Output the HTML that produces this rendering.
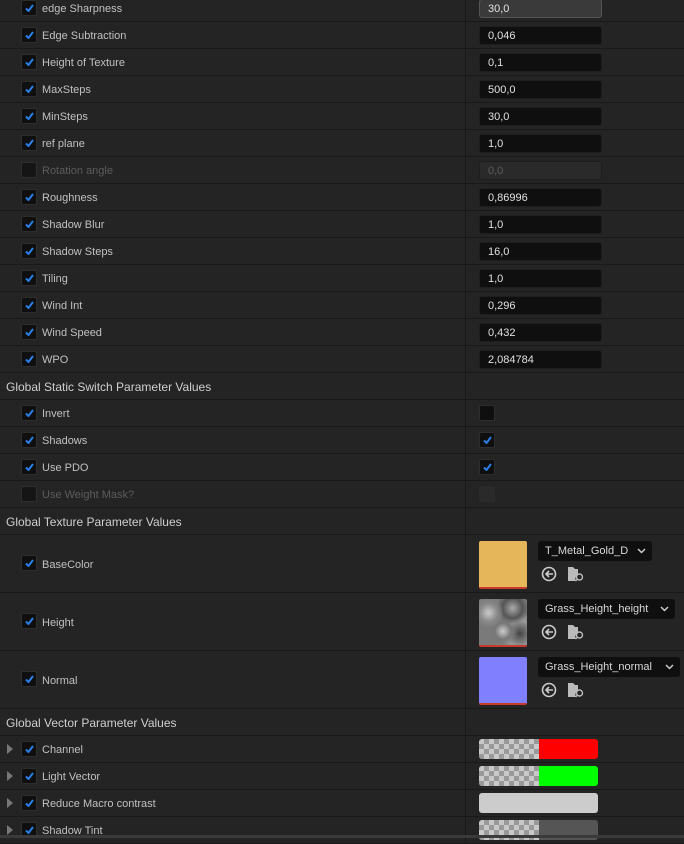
<!DOCTYPE html>
<html><head><meta charset="utf-8"><style>
*{margin:0;padding:0;box-sizing:border-box}
body{width:684px;height:838px;background:#242424;overflow:hidden;position:relative;font-family:"Liberation Sans",sans-serif;font-size:11px;color:#c0c0c0}
.r{position:absolute;left:0;width:684px;height:27px;background:#242424;border-bottom:1px solid #191919}
.r:after{content:"";position:absolute;left:465px;top:0;bottom:0;width:1px;background:#191919}
.cb{position:absolute;left:21px;width:16px;height:16px;background:#0f0f0f;border:1px solid #2e2e2e;border-radius:2px}
.cb svg{position:absolute;left:3px;top:3px}
.lb{position:absolute;left:42px;line-height:14px}
.v{position:absolute;left:479px;top:4px;width:123px;height:19px;background:#0f0f0f;border:1px solid #1e1e1e;border-radius:3px;padding-left:8px;line-height:18px;color:#e0e0e0}
.h{font-size:12px;color:#cfcfcf}
.h span{position:absolute;left:6px;top:7px}
.dis{color:#5c5c5c}
.tri{position:absolute;left:7px;width:0;height:0;border-left:6px solid #777;border-top:5px solid transparent;border-bottom:5px solid transparent}
.cbar{position:absolute;left:479px;top:3px;width:119px;height:20px;border-radius:3px;overflow:hidden;background:#ccc}
.chk{position:absolute;left:0;top:0;width:60px;height:20px;background-color:#c8c8c8;background-image:linear-gradient(45deg,#999 25%,transparent 25%,transparent 75%,#999 75%),linear-gradient(45deg,#999 25%,transparent 25%,transparent 75%,#999 75%);background-size:10px 10px;background-position:0 0,5px 5px}
.tex{position:absolute;left:479px;top:6px;width:48px;height:48px;border-radius:2px;border-bottom:2px solid #c83a2e}
.dd{position:absolute;left:538px;top:6px;height:20px;background:#0f0f0f;border-radius:3px;padding-left:7px;line-height:21px;color:#d8d8d8;font-size:11px}
.dd svg{position:absolute;right:6px;top:7px}
.ic{position:absolute;top:31px}
</style></head><body>

<div class="r" style="top:-5px"><div class="cb" style="top:5px"><svg width="9" height="8"><path d="M1 4.5L3.5 7L8 1" stroke="#2a7fe6" stroke-width="2" fill="none"/></svg></div><div class="lb" style="top:7px">edge Sharpness</div><div class="v" style="background:#3a3a3a;border-color:#555">30,0</div></div>
<div class="r" style="top:22px"><div class="cb" style="top:5px"><svg width="9" height="8"><path d="M1 4.5L3.5 7L8 1" stroke="#2a7fe6" stroke-width="2" fill="none"/></svg></div><div class="lb" style="top:7px">Edge Subtraction</div><div class="v">0,046</div></div>
<div class="r" style="top:49px"><div class="cb" style="top:5px"><svg width="9" height="8"><path d="M1 4.5L3.5 7L8 1" stroke="#2a7fe6" stroke-width="2" fill="none"/></svg></div><div class="lb" style="top:7px">Height of Texture</div><div class="v">0,1</div></div>
<div class="r" style="top:76px"><div class="cb" style="top:5px"><svg width="9" height="8"><path d="M1 4.5L3.5 7L8 1" stroke="#2a7fe6" stroke-width="2" fill="none"/></svg></div><div class="lb" style="top:7px">MaxSteps</div><div class="v">500,0</div></div>
<div class="r" style="top:103px"><div class="cb" style="top:5px"><svg width="9" height="8"><path d="M1 4.5L3.5 7L8 1" stroke="#2a7fe6" stroke-width="2" fill="none"/></svg></div><div class="lb" style="top:7px">MinSteps</div><div class="v">30,0</div></div>
<div class="r" style="top:130px"><div class="cb" style="top:5px"><svg width="9" height="8"><path d="M1 4.5L3.5 7L8 1" stroke="#2a7fe6" stroke-width="2" fill="none"/></svg></div><div class="lb" style="top:7px">ref plane</div><div class="v">1,0</div></div>
<div class="r" style="top:157px"><div class="cb" style="top:5px;background:#151515"></div><div class="lb dis" style="top:7px">Rotation angle</div><div class="v" style="background:#2a2a2a;color:#5c5c5c">0,0</div></div>
<div class="r" style="top:184px"><div class="cb" style="top:5px"><svg width="9" height="8"><path d="M1 4.5L3.5 7L8 1" stroke="#2a7fe6" stroke-width="2" fill="none"/></svg></div><div class="lb" style="top:7px">Roughness</div><div class="v">0,86996</div></div>
<div class="r" style="top:211px"><div class="cb" style="top:5px"><svg width="9" height="8"><path d="M1 4.5L3.5 7L8 1" stroke="#2a7fe6" stroke-width="2" fill="none"/></svg></div><div class="lb" style="top:7px">Shadow Blur</div><div class="v">1,0</div></div>
<div class="r" style="top:238px"><div class="cb" style="top:5px"><svg width="9" height="8"><path d="M1 4.5L3.5 7L8 1" stroke="#2a7fe6" stroke-width="2" fill="none"/></svg></div><div class="lb" style="top:7px">Shadow Steps</div><div class="v">16,0</div></div>
<div class="r" style="top:265px"><div class="cb" style="top:5px"><svg width="9" height="8"><path d="M1 4.5L3.5 7L8 1" stroke="#2a7fe6" stroke-width="2" fill="none"/></svg></div><div class="lb" style="top:7px">Tiling</div><div class="v">1,0</div></div>
<div class="r" style="top:292px"><div class="cb" style="top:5px"><svg width="9" height="8"><path d="M1 4.5L3.5 7L8 1" stroke="#2a7fe6" stroke-width="2" fill="none"/></svg></div><div class="lb" style="top:7px">Wind Int</div><div class="v">0,296</div></div>
<div class="r" style="top:319px"><div class="cb" style="top:5px"><svg width="9" height="8"><path d="M1 4.5L3.5 7L8 1" stroke="#2a7fe6" stroke-width="2" fill="none"/></svg></div><div class="lb" style="top:7px">Wind Speed</div><div class="v">0,432</div></div>
<div class="r" style="top:346px"><div class="cb" style="top:5px"><svg width="9" height="8"><path d="M1 4.5L3.5 7L8 1" stroke="#2a7fe6" stroke-width="2" fill="none"/></svg></div><div class="lb" style="top:7px">WPO</div><div class="v">2,084784</div></div>

<div class="r h" style="top:373px"><span>Global Static Switch Parameter Values</span></div>
<div class="r" style="top:400px"><div class="cb" style="top:5px"><svg width="9" height="8"><path d="M1 4.5L3.5 7L8 1" stroke="#2a7fe6" stroke-width="2" fill="none"/></svg></div><div class="lb" style="top:7px">Invert</div><div class="cb" style="top:5px;left:479px"></div></div>
<div class="r" style="top:427px"><div class="cb" style="top:5px"><svg width="9" height="8"><path d="M1 4.5L3.5 7L8 1" stroke="#2a7fe6" stroke-width="2" fill="none"/></svg></div><div class="lb" style="top:7px">Shadows</div><div class="cb" style="top:5px;left:479px"><svg width="9" height="8"><path d="M1 4.5L3.5 7L8 1" stroke="#2a7fe6" stroke-width="2" fill="none"/></svg></div></div>
<div class="r" style="top:454px"><div class="cb" style="top:5px"><svg width="9" height="8"><path d="M1 4.5L3.5 7L8 1" stroke="#2a7fe6" stroke-width="2" fill="none"/></svg></div><div class="lb" style="top:7px">Use PDO</div><div class="cb" style="top:5px;left:479px"><svg width="9" height="8"><path d="M1 4.5L3.5 7L8 1" stroke="#2a7fe6" stroke-width="2" fill="none"/></svg></div></div>
<div class="r" style="top:481px"><div class="cb" style="top:5px;background:#151515"></div><div class="lb dis" style="top:7px">Use Weight Mask?</div><div class="cb" style="top:5px;left:479px;background:#2a2a2a;border-color:#2a2a2a"></div></div>

<div class="r h" style="top:508px"><span>Global Texture Parameter Values</span></div>
<div class="r" style="top:535px;height:58px"><div class="cb" style="top:20px"><svg width="9" height="8"><path d="M1 4.5L3.5 7L8 1" stroke="#2a7fe6" stroke-width="2" fill="none"/></svg></div><div class="lb" style="top:23px">BaseColor</div>
<div class="tex" style="background:#e6b65a"></div>
<div class="dd" style="width:114px">T_Metal_Gold_D<svg width="9" height="6"><path d="M1 1L4.5 4.5L8 1" stroke="#ccc" stroke-width="1.5" fill="none"/></svg></div>
<svg class="ic" style="left:541px" width="16" height="16"><circle cx="8" cy="8" r="6.5" stroke="#ccc" stroke-width="1.6" fill="none"/><path d="M12 8H5M8 5L5 8L8 11" stroke="#ccc" stroke-width="1.6" fill="none"/></svg>
<svg class="ic" style="left:567px" width="18" height="16"><path d="M1 1H6L8 3H11V9A4 4 0 0 0 9 15H1Z" fill="#bbb"/><circle cx="12.5" cy="11" r="3" stroke="#bbb" stroke-width="1.4" fill="none"/><path d="M10.5 13L8.5 15" stroke="#bbb" stroke-width="1.4"/></svg></div>
<div class="r" style="top:593px;height:58px"><div class="cb" style="top:20px"><svg width="9" height="8"><path d="M1 4.5L3.5 7L8 1" stroke="#2a7fe6" stroke-width="2" fill="none"/></svg></div><div class="lb" style="top:23px">Height</div>
<div class="tex" style="background:radial-gradient(circle at 20% 30%,#ccc 0,#888 18%,transparent 30%),radial-gradient(circle at 70% 20%,#aaa 0,#555 20%,transparent 32%),radial-gradient(circle at 50% 70%,#ccc 0,#777 20%,transparent 35%),radial-gradient(circle at 85% 75%,#444 0,#999 25%,transparent 40%),#7a7a7a"></div>
<div class="dd" style="width:137px">Grass_Height_height<svg width="9" height="6"><path d="M1 1L4.5 4.5L8 1" stroke="#ccc" stroke-width="1.5" fill="none"/></svg></div>
<svg class="ic" style="left:541px" width="16" height="16"><circle cx="8" cy="8" r="6.5" stroke="#ccc" stroke-width="1.6" fill="none"/><path d="M12 8H5M8 5L5 8L8 11" stroke="#ccc" stroke-width="1.6" fill="none"/></svg>
<svg class="ic" style="left:567px" width="18" height="16"><path d="M1 1H6L8 3H11V9A4 4 0 0 0 9 15H1Z" fill="#bbb"/><circle cx="12.5" cy="11" r="3" stroke="#bbb" stroke-width="1.4" fill="none"/><path d="M10.5 13L8.5 15" stroke="#bbb" stroke-width="1.4"/></svg></div>
<div class="r" style="top:651px;height:58px"><div class="cb" style="top:20px"><svg width="9" height="8"><path d="M1 4.5L3.5 7L8 1" stroke="#2a7fe6" stroke-width="2" fill="none"/></svg></div><div class="lb" style="top:23px">Normal</div>
<div class="tex" style="background:#8080ff"></div>
<div class="dd" style="width:142px">Grass_Height_normal<svg width="9" height="6"><path d="M1 1L4.5 4.5L8 1" stroke="#ccc" stroke-width="1.5" fill="none"/></svg></div>
<svg class="ic" style="left:541px" width="16" height="16"><circle cx="8" cy="8" r="6.5" stroke="#ccc" stroke-width="1.6" fill="none"/><path d="M12 8H5M8 5L5 8L8 11" stroke="#ccc" stroke-width="1.6" fill="none"/></svg>
<svg class="ic" style="left:567px" width="18" height="16"><path d="M1 1H6L8 3H11V9A4 4 0 0 0 9 15H1Z" fill="#bbb"/><circle cx="12.5" cy="11" r="3" stroke="#bbb" stroke-width="1.4" fill="none"/><path d="M10.5 13L8.5 15" stroke="#bbb" stroke-width="1.4"/></svg></div>

<div class="r h" style="top:709px"><span>Global Vector Parameter Values</span></div>
<div class="r" style="top:736px"><div class="tri" style="top:8px"></div><div class="cb" style="top:5px"><svg width="9" height="8"><path d="M1 4.5L3.5 7L8 1" stroke="#2a7fe6" stroke-width="2" fill="none"/></svg></div><div class="lb" style="top:7px">Channel</div><div class="cbar" style="background:#ff0000"><div class="chk"></div></div></div>
<div class="r" style="top:763px"><div class="tri" style="top:8px"></div><div class="cb" style="top:5px"><svg width="9" height="8"><path d="M1 4.5L3.5 7L8 1" stroke="#2a7fe6" stroke-width="2" fill="none"/></svg></div><div class="lb" style="top:7px">Light Vector</div><div class="cbar" style="background:#00ff00"><div class="chk"></div></div></div>
<div class="r" style="top:790px"><div class="tri" style="top:8px"></div><div class="cb" style="top:5px"><svg width="9" height="8"><path d="M1 4.5L3.5 7L8 1" stroke="#2a7fe6" stroke-width="2" fill="none"/></svg></div><div class="lb" style="top:7px">Reduce Macro contrast</div><div class="cbar" style="background:#cccccc"></div></div>
<div class="r" style="top:817px"><div class="tri" style="top:8px"></div><div class="cb" style="top:5px"><svg width="9" height="8"><path d="M1 4.5L3.5 7L8 1" stroke="#2a7fe6" stroke-width="2" fill="none"/></svg></div><div class="lb" style="top:7px">Shadow Tint</div><div class="cbar" style="background:#555"><div class="chk"></div></div></div>
<div style="position:absolute;left:0;top:835px;width:684px;height:3px;background:#3a3a3a"></div>
</body></html>
